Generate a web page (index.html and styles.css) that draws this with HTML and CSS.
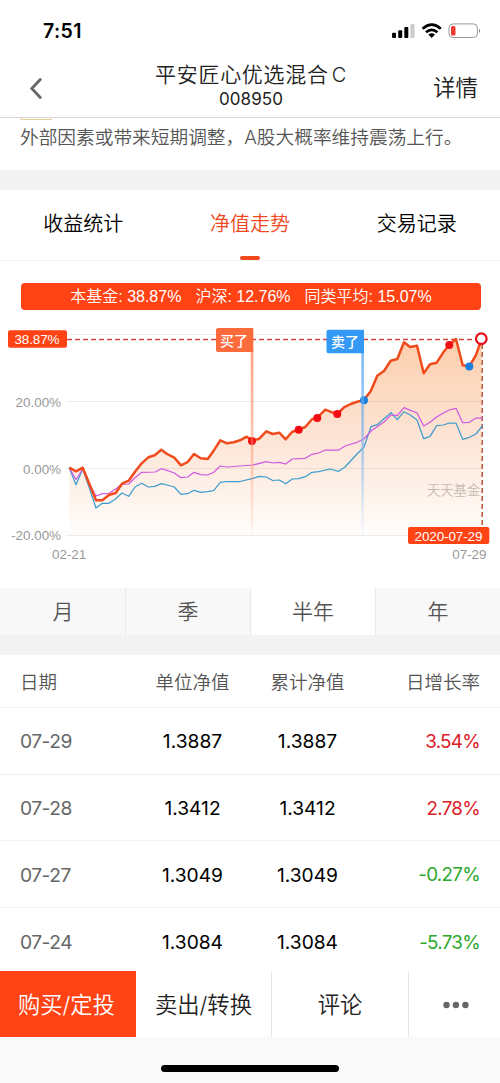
FILE: index.html
```html
<!DOCTYPE html>
<html lang="zh-CN">
<head>
<meta charset="utf-8">
<title>平安匠心优选混合C</title>
<link rel="stylesheet" href="styles.css">
</head>
<body>
<div class="app">
  <div class="status">
    <span class="clock">7:51</span>
    <svg class="status-icons" width="92" height="18" viewBox="390 22 92 18">
      <rect x="392" y="32.7" width="4" height="5.3" rx="1"/>
      <rect x="398.2" y="30.3" width="4" height="7.7" rx="1"/>
      <rect x="404.3" y="27" width="4" height="11" rx="1"/>
      <rect x="410.5" y="24" width="4" height="14" rx="1" fill="#ccc"/>
      <g fill="none" stroke="#000" stroke-width="2.7">
        <path d="M422.6 28.7Q431.7 20.7 440.8 28.7"/>
        <path d="M426 32.3Q431.7 27.3 437.4 32.3"/>
      </g>
      <path d="M428.4 34.6Q431.7 32 435 34.6L431.7 38Z"/>
      <rect x="449" y="23.9" width="28.4" height="13.6" rx="4" fill="none" stroke="#999"/>
      <rect x="451" y="26" width="4.5" height="9.5" rx="1.5" fill="#f03a30"/>
      <path d="M479 28.5Q481.3 30.8 479 33Z" fill="#888"/>
    </svg>
  </div>
  <header class="nav">
    <svg class="back" width="16" height="24" viewBox="0 0 16 24"><path d="M12.3 3.5L3.8 12.5L12.3 21.5" fill="none" stroke="#666" stroke-width="2.8" stroke-linecap="round"/></svg>
    <div class="heading">
      <div class="fund-name">平安匠心优选混合<span class="fund-class">C</span></div>
      <div class="fund-code">008950</div>
    </div>
    <div class="detail">详情</div>
  </header>
  <div class="comment">
    <i class="tag-edge"></i>
    <p class="comment-text">外部因素或带来短期调整，A股大概率维持震荡上行。</p>
  </div>
  <div class="gap"></div>
  <nav class="tabs">
    <div class="tab">收益统计</div>
    <div class="tab active">净值走势</div>
    <div class="tab">交易记录</div>
  </nav>
  <div class="legend"><span>本基金: 38.87%</span><span>沪深: 12.76%</span><span>同类平均: 15.07%</span></div>
  <svg class="chart" width="500" height="278" viewBox="0 310 500 278">
    <defs>
      <linearGradient id="area" x1="0" y1="338" x2="0" y2="535" gradientUnits="userSpaceOnUse"><stop stop-color="#fbceab"/><stop offset=".5" stop-color="#fde4d5"/><stop offset="1" stop-color="#fffdfb"/></linearGradient>
      <linearGradient id="buy" x1="0" y1="350" x2="0" y2="535" gradientUnits="userSpaceOnUse"><stop stop-color="#fd7543" stop-opacity=".7"/><stop offset=".5" stop-color="#fd8d68" stop-opacity=".5"/><stop offset="1" stop-color="#fd8d68" stop-opacity=".05"/></linearGradient>
      <linearGradient id="sell" x1="0" y1="350" x2="0" y2="535" gradientUnits="userSpaceOnUse"><stop stop-color="#50a3f5" stop-opacity=".75"/><stop offset=".55" stop-color="#7fb8ef" stop-opacity=".65"/><stop offset="1" stop-color="#8fc4f5" stop-opacity=".05"/></linearGradient>
    </defs>
    <path class="area" d="M69.3 467.7L76 471.3L82.7 467.7L89 483L96 500.3L102.3 500.3L109.3 494.7L115.7 493L122 483.7L128.7 480.7L135 471.7L141.7 463.3L148.3 457.3L154.7 455.3L161.3 449.7L167 454L174.3 457.7L181 465.3L187.7 462L194 454L200.7 458.3L207.7 459L213.7 450.7L220.3 440.3L227 443.3L233.7 442.3L240 440.3L246.7 436.7L252.7 440.7L259.3 438.7L266.3 431.3L272.7 434L279.3 432.7L285.7 439.3L292.3 431.7L298.7 429.7L305.3 427L312 419.3L317.3 417.7L325.3 409.7L330.5 411.7L337.3 414L344 407.3L350.7 404L357.3 401.7L363.7 400L370.7 391.3L377.3 375.7L384 371L390.7 360.7L397.3 359L404 342.3L410 347L417 345.7L423.7 373.3L430 364.3L436.7 362.7L443.3 352.3L449.3 345L456 339L462.7 365.3L469.3 366.3L476 355L481.7 338.7V535.3H69.3Z"/>
    <path class="grid" d="M66 334.5H484M66 401.5H484M66 468.5H484M66 535.5H484"/>
    <text class="watermark" x="427" y="494.5">天天基金</text>
    <path class="guide" d="M67 339.5H481"/>
    <path class="guide vertical" d="M482.2 344V527"/>
    <path class="line market" d="M69.3 467.7L76 484.7L82.7 469L89 487L96 508L102.3 503.3L109 503.3L115.5 499L122 493L128.7 496.3L135 487L141.7 483.3L148.3 487L155 486.3L161.3 483.7L167 485L174.3 487L181 494.3L187.7 493.7L194 490.3L200.7 492.3L207.7 491.7L213.7 490.7L220.3 482.3L227 481.5H240L253 478.3L259.3 476.3L266.3 477L272.7 480.5L279.3 480L285.7 483.7L292.3 479L298.7 478.7L305.3 476.7L312 472.3L318.7 471.7L330 469L338.7 471.3L345 467L357 454L364 447L371 426.7L377.3 424.7L384 418.7L391 412.7L397.3 419.7L404 411.7L410.5 415.3L417 420L423.7 438.7L430 436.3L436.7 425.7L443.3 425L449.3 423L456 423L462.7 439.3L469.3 437.3L476 434L482.7 425.3"/>
    <path class="line average" d="M69.3 467.7L76 479.5L82.7 469L89 483L96 496L102.3 493.7L109 493.3L115.7 489L122 484.3L128.7 484L135 477.7L141.7 472.3L155 472L161.3 468.7L167 470.3L174.3 473L181 477.7L187.7 477L194 472.3L200.7 474.7L207.7 475L213.7 472.3L220.3 466L227 467L240 466L253 465L266.3 461.7L272.7 463L279.3 462.3L285.7 464L292.3 459L305.3 458.3L312 454.3L318.7 453L325.3 450L338.7 450L345 446L357 442.3L364 439L371 431L384 422L391 415L397.3 415.7L404 407.7L410.5 410.3L417 413L423.7 426L430 422.3L436.7 417L443.3 413L449.3 410L456 408.3L462.7 422.7L469.3 422.3L476 418H482.7"/>
    <path class="line fund" d="M69.3 467.7L76 471.3L82.7 467.7L89 483L96 500.3L102.3 500.3L109.3 494.7L115.7 493L122 483.7L128.7 480.7L135 471.7L141.7 463.3L148.3 457.3L154.7 455.3L161.3 449.7L167 454L174.3 457.7L181 465.3L187.7 462L194 454L200.7 458.3L207.7 459L213.7 450.7L220.3 440.3L227 443.3L233.7 442.3L240 440.3L246.7 436.7L252.7 440.7L259.3 438.7L266.3 431.3L272.7 434L279.3 432.7L285.7 439.3L292.3 431.7L298.7 429.7L305.3 427L312 419.3L317.3 417.7L325.3 409.7L330.5 411.7L337.3 414L344 407.3L350.7 404L357.3 401.7L363.7 400L370.7 391.3L377.3 375.7L384 371L390.7 360.7L397.3 359L404 342.3L410 347L417 345.7L423.7 373.3L430 364.3L436.7 362.7L443.3 352.3L449.3 345L456 339L462.7 365.3L469.3 366.3L476 355L481.7 338.7"/>
    <g fill="#f20d14"><circle cx="252" cy="441" r="4"/><circle cx="298.7" cy="429.8" r="4"/><circle cx="317.3" cy="418" r="4"/><circle cx="337.3" cy="414" r="4"/><circle cx="449.3" cy="345" r="4"/></g>
    <g fill="#1b7fe0"><circle cx="364" cy="400.3" r="4"/><circle cx="469.3" cy="366.5" r="4"/></g>
    <rect x="250.8" y="350" width="2.6" height="185" fill="url(#buy)"/>
    <rect x="361.3" y="350" width="2.6" height="185" fill="url(#sell)"/>
    <path d="M218 328H253.3V352H218Q216 352 216 350V330Q216 328 218 328Z" fill="#fb6b3b"/>
    <path d="M328.5 329.8H364V353.3H328.5Q326.5 353.3 326.5 351.3V331.8Q326.5 329.8 328.5 329.8Z" fill="#3399f5"/>
    <text class="marker" x="220" y="345.5">买了</text>
    <text class="marker" x="331" y="347">卖了</text>
    <circle cx="481.3" cy="338.7" r="5.3" fill="#fff" stroke="#e5101e" stroke-width="2.3"/>
    <rect x="8" y="330.3" width="59" height="17.4" rx="2" fill="#ff4314"/>
    <text class="badge" x="14.5" y="344" textLength="45">38.87%</text>
    <rect x="408" y="527" width="81.3" height="17" rx="2" fill="#ff4314"/>
    <text class="badge" x="414.5" y="540.5" textLength="68">2020-07-29</text>
    <g class="axis"><text x="61" y="407" text-anchor="end">20.00%</text><text x="61" y="473.7" text-anchor="end">0.00%</text><text x="61" y="540.3" text-anchor="end">-20.00%</text><text x="52" y="559">02-21</text><text x="486.5" y="559" text-anchor="end">07-29</text></g>
  </svg>
  <div class="periods">
    <div class="period">月</div><div class="period">季</div><div class="period chosen">半年</div><div class="period">年</div>
  </div>
  <div class="gap"></div>
  <div class="row head"><span>日期</span><span class="mid">单位净值</span><span class="mid">累计净值</span><span class="rate">日增长率</span></div>
  <div class="row"><span class="date">07-29</span><span class="mid">1.3887</span><span class="mid">1.3887</span><span class="rate up">3.54%</span></div>
  <div class="row"><span class="date">07-28</span><span class="mid">1.3412</span><span class="mid">1.3412</span><span class="rate up">2.78%</span></div>
  <div class="row"><span class="date">07-27</span><span class="mid">1.3049</span><span class="mid">1.3049</span><span class="rate down">-0.27%</span></div>
  <div class="row last"><span class="date">07-24</span><span class="mid">1.3084</span><span class="mid">1.3084</span><span class="rate down">-5.73%</span></div>
  <footer class="actions">
    <div class="action buy">购买/定投</div>
    <div class="action">卖出/转换</div>
    <div class="action">评论</div>
    <div class="action"><svg width="26" height="8" viewBox="0 0 26 8" fill="#666"><circle cx="3.5" cy="4" r="3.2"/><circle cx="12.9" cy="4" r="3.2"/><circle cx="22.4" cy="4" r="3.2"/></svg></div>
  </footer>
  <div class="home"><i class="home-bar"></i></div>
</div>
</body>
</html>
```

FILE: styles.css
```css
* { box-sizing: border-box; }
body { margin: 0; background: #fff; }
.app {
  width: 500px; height: 1083px; overflow: hidden;
  display: flex; flex-direction: column;
  font-family: Inter, "Noto Sans CJK SC", sans-serif;
  font-weight: 350; color: #222;
}
.app > * { flex-shrink: 0; }

.status { height: 56px; display: flex; justify-content: space-between; padding: 22px 18px 0 43px; }
.clock { font-size: 19.5px; line-height: 18px; font-weight: 600; color: #000; letter-spacing: .4px; }

.nav { height: 62px; display: flex; justify-content: space-between; padding: 0 22px 0 28px; border-bottom: 1px solid #d8d8d8; }
.back { margin-top: 20px; }
.heading { text-align: center; padding: 5px 0 0 25px; }
.fund-name { font-size: 21px; line-height: 28px; letter-spacing: .7px; white-space: nowrap; }
.fund-class { font-size: 20px; margin-left: 3px; }
.fund-code { font-size: 17px; line-height: 20px; font-weight: 400; letter-spacing: .1px; }
.detail { font-size: 22.5px; line-height: 64px; }

.comment { height: 52px; padding-left: 20px; color: #555; }
.tag-edge { display: block; width: 32px; height: 2px; border: 1px solid #e6cd98; border-top: 0; border-radius: 0 0 3px 3px; }
.comment-text { margin: 4px 0 0; font-size: 18.7px; line-height: 28px; white-space: nowrap; }
.gap { height: 20px; background: #f4f3f4; }

.tabs { height: 71px; display: grid; grid-template-columns: repeat(3, 1fr); border-bottom: 1px solid #f3f3f3; }
.tab { display: flex; flex-direction: column; align-items: center; padding-top: 2px; font-size: 20px; line-height: 64px; color: #000; }
.active { color: #f0491d; }
.active::after { content: ""; width: 20px; height: 4px; border-radius: 2px; background: #f0491d; }

.legend {
  height: 27px; margin: 22px 19px 0 21px; border-radius: 4px; background: #ff4314; color: #fff;
  display: flex; justify-content: center; gap: 14px;
  font-family: "Liberation Sans", "Noto Sans CJK SC", sans-serif; font-size: 16px; line-height: 27px; white-space: nowrap;
}
.chart { display: block; font-family: "Liberation Sans", "Noto Sans CJK SC", sans-serif; }
.area { fill: url(#area); }
.grid { stroke: #000; stroke-opacity: .07; }
.guide { fill: none; stroke: #d9453b; stroke-width: 1.4; stroke-dasharray: 5 3; }
.vertical { stroke: #bd5f43; stroke-width: 1.6; }
.line { fill: none; stroke-width: 1.25; stroke-linejoin: round; }
.market { stroke: #3e9cce; }
.average { stroke: #cf5be0; }
.fund { stroke: #f04b1d; stroke-width: 2.5; }
.watermark { font-size: 13.3px; fill: #c5b8b2; }
.marker { font-size: 14px; font-weight: 500; fill: #fff; }
.badge { font-size: 13.5px; font-weight: 400; fill: #fff; }
.axis { font-size: 13.4px; fill: #999; }

.periods { height: 47px; display: grid; grid-template-columns: repeat(4, 1fr); background: #f8f8f8; }
.period { text-align: center; font-size: 21px; line-height: 47px; color: #555; border-left: 1px solid #e9e9e9; }
.period:first-child { border-left-color: transparent; }
.chosen { background: #fff; }

.row {
  height: 66.7px; padding: 1px 20px 0; border-bottom: 1px solid #f1f1f1;
  display: grid; grid-template-columns: 115px 115px 115px 115px; align-items: center;
  font-size: 19.2px; font-weight: 400; color: #000;
}
.head { height: 53px; padding-top: 0; font-size: 18.5px; font-weight: 350; color: #555; }
.last { height: 63px; border-bottom: 0; padding-top: 5px; }
.mid { text-align: center; }
.date { color: #666; letter-spacing: -.5px; }
.rate { text-align: right; }
.up, .down { font-size: 18.8px; letter-spacing: -.7px; }
.up { color: #dc2028; }
.down { color: #2ca82c; }

.actions { height: 66px; display: grid; grid-template-columns: 136px 136px 137px 91px; background: #fff; }
.action { display: flex; align-items: center; justify-content: center; padding-bottom: 2px; font-size: 22.3px; border-right: 1px solid #e5e5e5; }
.action:last-child { border-right: 0; padding: 2px 0 0 3px; }
.action.buy { background: #ff4314; color: #fff; border-right: 0; padding-right: 3px; }
.home { height: 46px; background: #f9f9f9; padding-top: 28px; }
.home-bar { display: block; width: 178px; height: 7px; margin-left: 161px; border-radius: 4px; background: #000; }
```
